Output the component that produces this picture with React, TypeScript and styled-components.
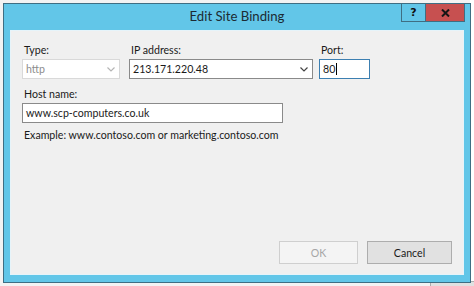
import React from 'react';
import styled, { createGlobalStyle } from 'styled-components';

const GlobalStyle = createGlobalStyle`
	html, body {
		margin: 0;
		padding: 0;
		background: #f3f3f3;
	}
	body {
		font-family: Lato, 'Noto Sans', sans-serif;
	}
`;

const Desktop = styled.div`
	width: 474px;
	height: 286px;
	padding: 3px 0 0 3px;
	box-sizing: border-box;
	overflow: hidden;
	position: relative;
	background: linear-gradient(to right, #f3f3f3 0 470px, #ffffff 470px);
`;

const BehindButton = styled.div`
	position: absolute;
	left: 430px;
	top: 281px;
	width: 50px;
	height: 10px;
	border: 1px solid #adadad;
	background: #e1e1e1;
`;

const Window = styled.div`
	position: relative;
	z-index: 1;
	width: 468px;
	height: 280px;
	box-sizing: border-box;
	border: 1px solid #3f6e83;
	background: #62c6e8;
	display: flex;
	flex-direction: column;
	padding: 0 6px 7px 6px;
`;

const TitleBar = styled.div`
	height: 26px;
	display: flex;
	align-items: flex-start;
	position: relative;
`;

const Title = styled.div`
	position: absolute;
	left: 0;
	right: 0;
	top: 4px;
	text-align: center;
	font-size: 13.2px;
	color: #1c2b33;
	pointer-events: none;
`;

const TitleButtons = styled.div`
	margin-left: auto;
	margin-top: -1px;
	margin-right: -1px;
	display: flex;
`;

const CaptionButton = styled.div<{ $close?: boolean }>`
	width: ${p => (p.$close ? '39px' : '25px')};
	height: 19px;
	box-sizing: border-box;
	border: 1px solid #3f6e83;
	border-left-width: ${p => (p.$close ? '0' : '1px')};
	background: ${p => (p.$close ? '#c75050' : '#62c6e8')};
	display: flex;
	align-items: center;
	justify-content: center;
	font-family: 'DejaVu Sans', sans-serif;
	font-weight: bold;
	font-size: 11px;
	color: #111;
`;

const Content = styled.div`
	flex: 1;
	background: #f0f0f0;
	box-shadow: inset 0 0 0 1px #e6f4fa;
	padding: 12px 12px 11px 12px;
	display: flex;
	flex-direction: column;
	font-size: 10.6px;
	color: #1a1a1a;
`;

const Row = styled.div`
	display: flex;
	gap: 9px;
`;

const Field = styled.div<{ $w: number; $gap?: number }>`
	width: ${p => p.$w}px;
	margin-left: ${p => (p.$gap ? `${p.$gap}px` : '0')};
	display: flex;
	flex-direction: column;
`;

const HostField = styled(Field)`
	margin-top: 7px;
`;

const Label = styled.div`
	height: 17px;
	line-height: 17px;
	padding-left: 2px;
`;

const Box = styled.div<{ $focus?: boolean; $disabled?: boolean }>`
	height: 20px;
	box-sizing: border-box;
	border: 1px solid ${p => (p.$focus ? '#3c7fb1' : p.$disabled ? '#d9d9d9' : '#8a8a8a')};
	background: #fff;
	display: flex;
	align-items: center;
	padding: 0 4px 0 3px;
	color: ${p => (p.$disabled ? '#8d8d8d' : '#1a1a1a')};
	white-space: nowrap;
`;

const BoxText = styled.span`
	flex: 1;
`;

const Caret = styled.span`
	width: 1px;
	height: 12px;
	background: #000;
	margin-left: 1px;
`;

const Chevron = ({ color }: { color: string }) => (
	<svg width='8' height='5' viewBox='0 0 8 5'>
		<polyline points='0.5,0.5 4,4 7.5,0.5' fill='none' stroke={color} strokeWidth='1.2' />
	</svg>
);

const CloseGlyph = () => (
	<svg width='9' height='8' viewBox='0 0 9 8'>
		<path d='M1 0.5 L8 7.5 M8 0.5 L1 7.5' stroke='#151515' strokeWidth='2' />
	</svg>
);

const Hint = styled.div`
	margin-top: 6px;
	padding-left: 2px;
`;

const Footer = styled.div`
	margin-top: auto;
	display: flex;
	justify-content: flex-end;
	gap: 9px;
`;

const Button = styled.div<{ $w: number; $disabled?: boolean }>`
	width: ${p => p.$w}px;
	height: 23px;
	box-sizing: border-box;
	border: 1px solid ${p => (p.$disabled ? '#cfcfcf' : '#adadad')};
	background: ${p => (p.$disabled ? '#f4f4f4' : '#e1e1e1')};
	color: ${p => (p.$disabled ? '#a6a6a6' : '#1a1a1a')};
	display: flex;
	align-items: center;
	justify-content: center;
`;

const App = () => {
	return (
		<Desktop>
			<GlobalStyle />
			<Window>
				<TitleBar>
					<Title>Edit Site Binding</Title>
					<TitleButtons>
						<CaptionButton>?</CaptionButton>
						<CaptionButton $close>
							<CloseGlyph />
						</CaptionButton>
					</TitleButtons>
				</TitleBar>
				<Content>
					<Row>
						<Field $w={98}>
							<Label>Type:</Label>
							<Box $disabled>
								<BoxText>http</BoxText>
								<Chevron color='#b5b5b5' />
							</Box>
						</Field>
						<Field $w={184}>
							<Label>IP address:</Label>
							<Box>
								<BoxText>213.171.220.48</BoxText>
								<Chevron color='#444' />
							</Box>
						</Field>
						<Field $w={51} $gap={-3}>
							<Label>Port:</Label>
							<Box $focus>
								80
								<Caret />
							</Box>
						</Field>
					</Row>
					<HostField $w={261}>
						<Label>Host name:</Label>
						<Box>www.scp-computers.co.uk</Box>
					</HostField>
					<Hint>Example: www.contoso.com or marketing.contoso.com</Hint>
					<Footer>
						<Button $w={79} $disabled>OK</Button>
						<Button $w={85}>Cancel</Button>
					</Footer>
				</Content>
			</Window>
			<BehindButton />
		</Desktop>
	);
};

export default App;
